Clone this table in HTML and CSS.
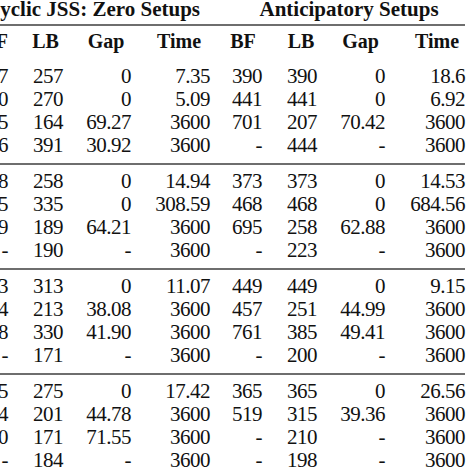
FILE: index.html
```html
<!DOCTYPE html>
<html lang="en">
<head>
<meta charset="utf-8">
<title>Results</title>
<link rel="stylesheet" href="styles.css">
</head>
<body>
<div class="page">
<table class="results">
<colgroup>
<col class="c-bf1"><col class="c-lb"><col class="c-gap"><col class="c-time1">
<col class="c-bf2"><col class="c-lb"><col class="c-gap"><col class="c-time2">
</colgroup>
<thead>
<tr class="titles">
<th colspan="4" class="t-left">Cyclic JSS: Zero Setups</th>
<th colspan="4" class="t-right">Anticipatory Setups</th>
</tr>
<tr class="heads">
<th class="h-bf1">BF</th><th class="h-lb1">LB</th><th class="h-gap1">Gap</th><th class="h-time1">Time</th>
<th class="h-bf2">BF</th><th class="h-lb2">LB</th><th class="h-gap2">Gap</th><th class="h-time2">Time</th>
</tr>
</thead>
<tbody>
<tr><td>257</td><td>257</td><td>0</td><td>7.35</td><td>390</td><td>390</td><td>0</td><td>18.6</td></tr>
<tr><td>270</td><td>270</td><td>0</td><td>5.09</td><td>441</td><td>441</td><td>0</td><td>6.92</td></tr>
<tr><td>535</td><td>164</td><td>69.27</td><td>3600</td><td>701</td><td>207</td><td>70.42</td><td>3600</td></tr>
<tr><td>566</td><td>391</td><td>30.92</td><td>3600</td><td>-</td><td>444</td><td>-</td><td>3600</td></tr>
</tbody>
<tbody>
<tr><td>258</td><td>258</td><td>0</td><td>14.94</td><td>373</td><td>373</td><td>0</td><td>14.53</td></tr>
<tr><td>335</td><td>335</td><td>0</td><td>308.59</td><td>468</td><td>468</td><td>0</td><td>684.56</td></tr>
<tr><td>529</td><td>189</td><td>64.21</td><td>3600</td><td>695</td><td>258</td><td>62.88</td><td>3600</td></tr>
<tr><td>-</td><td>190</td><td>-</td><td>3600</td><td>-</td><td>223</td><td>-</td><td>3600</td></tr>
</tbody>
<tbody>
<tr><td>313</td><td>313</td><td>0</td><td>11.07</td><td>449</td><td>449</td><td>0</td><td>9.15</td></tr>
<tr><td>344</td><td>213</td><td>38.08</td><td>3600</td><td>457</td><td>251</td><td>44.99</td><td>3600</td></tr>
<tr><td>568</td><td>330</td><td>41.90</td><td>3600</td><td>761</td><td>385</td><td>49.41</td><td>3600</td></tr>
<tr><td>-</td><td>171</td><td>-</td><td>3600</td><td>-</td><td>200</td><td>-</td><td>3600</td></tr>
</tbody>
<tbody>
<tr><td>275</td><td>275</td><td>0</td><td>17.42</td><td>365</td><td>365</td><td>0</td><td>26.56</td></tr>
<tr><td>364</td><td>201</td><td>44.78</td><td>3600</td><td>519</td><td>315</td><td>39.36</td><td>3600</td></tr>
<tr><td>600</td><td>171</td><td>71.55</td><td>3600</td><td>-</td><td>210</td><td>-</td><td>3600</td></tr>
<tr><td>-</td><td>184</td><td>-</td><td>3600</td><td>-</td><td>198</td><td>-</td><td>3600</td></tr>
</tbody>
</table>
</div>
</body>
</html>
```
FILE: styles.css
```css
html, body {
  margin: 0;
  padding: 0;
  background: #ffffff;
  overflow: hidden;
}

.page {
  margin-left: -42px;
  width: 520px;
}

.results {
  table-layout: fixed;
  width: 507px;
  border-collapse: separate;
  border-spacing: 0;
  font-family: "Liberation Serif", "Times New Roman", serif;
  font-size: 20px;
  color: #111111;
}

.c-bf1 { width: 50px; }
.c-lb { width: 55px; }
.c-gap { width: 68px; }
.c-time1 { width: 79px; }
.c-bf2 { width: 52px; }
.c-time2 { width: 80px; }

th, td {
  padding: 0;
  white-space: nowrap;
}

.titles th {
  font-size: 21px;
  font-weight: bold;
  line-height: 18px;
  height: 18px;
  padding-bottom: 6px;
  border-bottom: 2px solid #6e6e6e;
  vertical-align: bottom;
}

.t-left {
  text-align: right;
  padding-right: 10px;
}

.t-right {
  text-align: center;
  padding-left: 23px;
}

.heads th {
  font-weight: bold;
  line-height: 23px;
  padding-top: 4px;
  padding-bottom: 12px;
  text-align: center;
}

.heads .h-bf1 { text-align: right; }
.heads .h-lb1 { padding-left: 20px; }
.heads .h-gap1 { padding-left: 18px; }
.heads .h-time1 { padding-left: 17px; }
.heads .h-bf2 { padding-left: 14px; }
.heads .h-lb2 { padding-left: 23px; }
.heads .h-gap2 { padding-left: 19px; }
.heads .h-time2 { padding-left: 24px; }

td {
  font-size: 21px;
  letter-spacing: -0.5px;
  line-height: 23px;
  text-align: right;
}

tbody tr:last-child td {
  padding-bottom: 6px;
}

tbody + tbody tr:first-child td {
  border-top: 2px solid #6e6e6e;
  padding-top: 5px;
}
```
